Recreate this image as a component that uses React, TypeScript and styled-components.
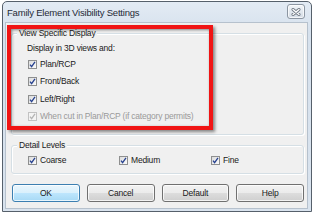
import React from 'react'
import styled, { createGlobalStyle } from 'styled-components'

const GlobalStyle = createGlobalStyle`
    html, body {
        margin: 0;
        padding: 0;
        background: #ffffff;
    }
    * {
        box-sizing: border-box;
    }
`

const Page = styled.div`
    position: relative;
    width: 315px;
    height: 214px;
    padding: 1px 3px 0 2px;
    font-family: "Liberation Sans", Arial, sans-serif;
`

const Dialog = styled.div`
    width: 310px;
    height: 211px;
    display: flex;
    flex-direction: column;
    border: 1px solid #56606b;
    border-radius: 5px 5px 0 0;
    background: linear-gradient(#e3ebf4, #d6e1ed 30px, #d9e3ee);
`

const TitleBar = styled.div`
    height: 20px;
    display: flex;
    align-items: flex-start;
    justify-content: space-between;
    padding: 0 6px 0 4px;
`

const Title = styled.span`
    margin-top: 5px;
    font-size: 9.5px;
    letter-spacing: -0.2px;
    color: #1f2a36;
    line-height: 11px;
`

const CloseButton = styled.div`
    margin-top: 2px;
    width: 18px;
    height: 15px;
    display: flex;
    align-items: center;
    justify-content: center;
    border: 1px solid #8c96a2;
    border-radius: 3px;
    background: linear-gradient(#f3f6f9, #e2e8ef 50%, #d5dde6);
    box-shadow: inset 0 0 0 1px rgba(255, 255, 255, 0.7);
`

const Client = styled.div`
    flex: 1;
    margin: 0 3px 2px 2px;
    display: flex;
    flex-direction: column;
    border: 1px solid #b6c1cd;
    background: #f0f0f0;
    padding: 10px 3px 0 5px;
`

const Group = styled.div<{ h: number }>`
    position: relative;
    height: ${({ h }) => h}px;
    border: 1px solid #d5dfe5;
    border-radius: 3px;
    box-shadow: inset 1px 1px 0 #ffffff, 1px 1px 0 #ffffff;
`

const Legend = styled.span`
    position: absolute;
    top: -6px;
    left: 5px;
    padding: 0 2px;
    background: #f0f0f0;
    font-size: 8.5px;
    letter-spacing: -0.2px;
    line-height: 11px;
    color: #1a1a1a;
`

const GroupBody = styled.div`
    padding: 8px 0 0 15px;
`

const Heading = styled.div`
    height: 12px;
    font-size: 8.5px;
    letter-spacing: -0.2px;
    line-height: 12px;
    color: #1a1a1a;
`

const CheckList = styled.div`
    margin-top: 1.5px;
    padding-left: 1px;
`

const Row = styled.div`
    height: 17.5px;
    display: flex;
    align-items: center;
`

const Check = styled.label<{ disabled?: boolean }>`
    display: flex;
    align-items: center;
    gap: 3px;
    font-size: 8.5px;
    letter-spacing: -0.2px;
    line-height: 11px;
    color: ${({ disabled }) => (disabled ? '#9a9a9a' : '#1a1a1a')};
    white-space: nowrap;
`

const Box = styled.span<{ disabled?: boolean }>`
    width: 9px;
    height: 9px;
    display: flex;
    align-items: center;
    justify-content: center;
    border: 1px solid ${({ disabled }) => (disabled ? '#c2c2c2' : '#8e8f8f')};
    background: ${({ disabled }) =>
        disabled ? '#f4f4f4' : 'linear-gradient(135deg, #dcdcdc, #fbfbfb)'};
`

const LevelGrid = styled.div`
    height: 100%;
    display: grid;
    grid-template-columns: 91px 92px 1fr;
    align-items: center;
    padding: 1px 0 0 16px;
`

const Spacer = styled.div<{ h: number }>`
    height: ${({ h }) => h}px;
    flex-shrink: 0;
`

const Buttons = styled.div`
    display: grid;
    grid-template-columns: repeat(4, 1fr);
    gap: 7px;
    margin-left: 1px;
`

const Button = styled.div<{ primary?: boolean }>`
    height: 18px;
    display: flex;
    align-items: center;
    justify-content: center;
    border: 1px solid ${({ primary }) => (primary ? '#3c7fb1' : '#707070')};
    border-radius: 3px;
    background: ${({ primary }) =>
        primary
            ? 'linear-gradient(#eaf6fd, #d9f0fc 50%, #bee6fd 50%, #a7d9f5)'
            : 'linear-gradient(#f2f2f2, #ebebeb 50%, #dddddd 50%, #cfcfcf)'};
    box-shadow: inset 0 0 0 1px rgba(255, 255, 255, 0.75);
    font-size: 8.5px;
    letter-spacing: -0.2px;
    color: #1a1a1a;
`

const Highlight = styled.div`
    position: absolute;
    left: 7px;
    top: 25px;
    width: 206px;
    height: 105px;
    border: 4px solid #f01414;
    box-shadow: 2px 2px 3px rgba(0, 0, 0, 0.45), inset 1px 1px 3px rgba(0, 0, 0, 0.45);
    pointer-events: none;
`

function CheckBox({ label, disabled }: { label: string; disabled?: boolean }) {
    return (
        <Check disabled={disabled}>
            <Box disabled={disabled}>
                <svg width="7" height="7" viewBox="0 0 7 7">
                    <path
                        d="M1 3.6 L2.6 5.6 L6 0.8"
                        fill="none"
                        stroke={disabled ? '#b4b4b4' : '#25408f'}
                        strokeWidth="1.3"
                    />
                </svg>
            </Box>
            {label}
        </Check>
    )
}

const viewOptions = [
    { id: 0, name: 'Plan/RCP' },
    { id: 1, name: 'Front/Back' },
    { id: 2, name: 'Left/Right' },
    { id: 3, name: 'When cut in Plan/RCP (if category permits)', disabled: true },
]

const buttons = ['OK', 'Cancel', 'Default', 'Help']

export default function App() {
    return (
        <Page>
            <GlobalStyle />
            <Dialog>
                <TitleBar>
                    <Title>Family Element Visibility Settings</Title>
                    <CloseButton>
                        <svg width="10" height="8" viewBox="0 0 10 8">
                            <path d="M2 1.5 L8 6.5 M8 1.5 L2 6.5" stroke="#6f7883" strokeWidth="3" strokeLinecap="round" />
                            <path d="M2 1.5 L8 6.5 M8 1.5 L2 6.5" stroke="#ffffff" strokeWidth="1.4" strokeLinecap="round" />
                        </svg>
                    </CloseButton>
                </TitleBar>
                <Client>
                    <Group h={102}>
                        <Legend>View Specific Display</Legend>
                        <GroupBody>
                            <Heading>Display in 3D views and:</Heading>
                            <CheckList>
                                {viewOptions.map(option => (
                                    <Row key={option.id}>
                                        <CheckBox label={option.name} disabled={option.disabled} />
                                    </Row>
                                ))}
                            </CheckList>
                        </GroupBody>
                    </Group>
                    <Spacer h={10} />
                    <Group h={29}>
                        <Legend>Detail Levels</Legend>
                        <LevelGrid>
                            <CheckBox label="Coarse" />
                            <CheckBox label="Medium" />
                            <CheckBox label="Fine" />
                        </LevelGrid>
                    </Group>
                    <Spacer h={10} />
                    <Buttons>
                        {buttons.map((name, i) => (
                            <Button key={name} primary={i === 0}>{name}</Button>
                        ))}
                    </Buttons>
                </Client>
            </Dialog>
            <Highlight />
        </Page>
    )
}
